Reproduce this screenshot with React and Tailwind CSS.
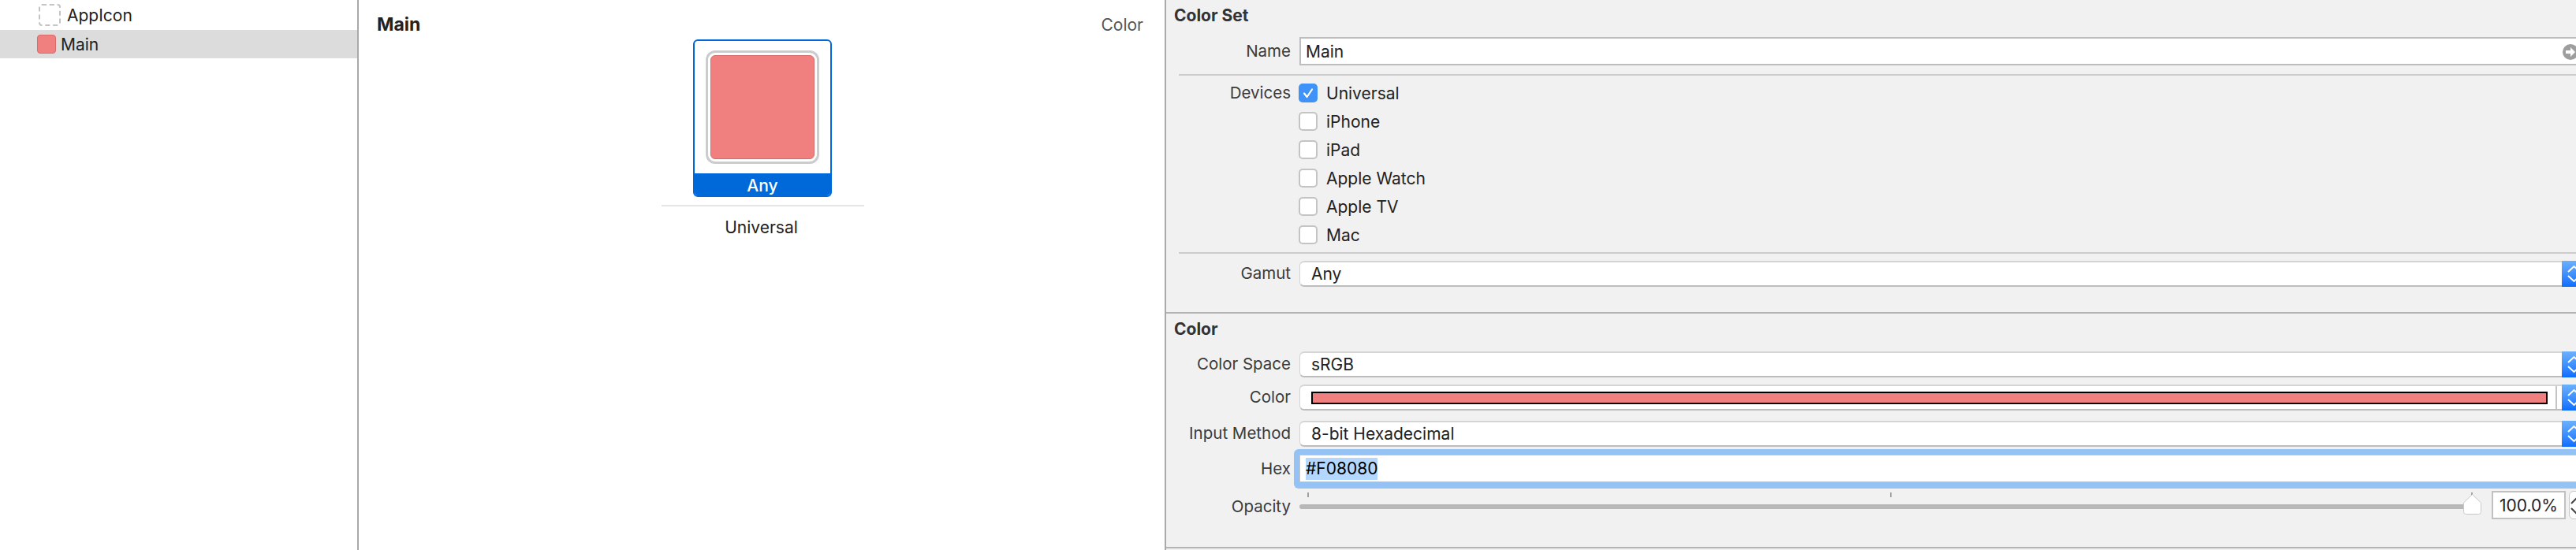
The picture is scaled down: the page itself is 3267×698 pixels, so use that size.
import React from 'react';

const Check = () => (
  <svg viewBox="0 0 24 24" className="w-6 h-6" fill="none">
    <path d="M7 12.5l3.6 4.5L17 7.5" stroke="#fff" strokeWidth="2.2" strokeLinecap="round" strokeLinejoin="round" />
  </svg>
);

const Chevrons = ({ color = '#fff' }) => (
  <svg viewBox="0 0 18 33" className="w-[18px] h-[33px] shrink-0" fill="none">
    <path d="M8 14l7.500-7 7.500 7" stroke={color} strokeWidth="2" />
    <path d="M8 19l7.500 7 7.500-7" stroke={color} strokeWidth="2" />
  </svg>
);

const Stepper = () => (
  <div className="absolute right-0 top-[-2px] h-[33px] w-[18px] overflow-hidden bg-gradient-to-b from-[#6cb0fb] to-[#0a6cff]">
    <Chevrons />
  </div>
);

const Label = ({ children }) => (
  <div className="w-[158px] text-right text-[20.5px] text-[#3a3a3a] shrink-0 mr-[11px]">{children}</div>
);

const Select = ({ label, mt, children }) => (
  <div className={`flex items-center h-[33px] ${mt}`}>
    <Label>{label}</Label>
    <div className="relative flex-1 h-full bg-white rounded-l-[6px] border-t-2 border-b-2 border-l border-t-[#d4d4d4] border-b-[#bdbdbd] border-l-[#d4d4d4] pl-[14px] flex items-center text-[#222]">
      {children}
      <Stepper />
    </div>
  </div>
);

const devices = ['Universal', 'iPhone', 'iPad', 'Apple Watch', 'Apple TV', 'Mac'];

export default function App() {
  return (
    <div className="flex w-[3267px] h-[698px] overflow-hidden bg-white font-['Inter',sans-serif] text-[21px] leading-none text-[#222]">
      {/* asset list */}
      <div className="w-[453px] shrink-0 border-r-2 border-[#a9a9a9] box-content">
        <div className="flex items-center h-[38px] pl-[49px]">
          <div className="w-[28px] h-[28px] rounded-[4px] border-2 border-dashed border-[#c4c4c4]" />
          <span className="ml-2">AppIcon</span>
        </div>
        <div className="flex items-center h-[36px] pl-[47px] bg-[#dcdcdc]">
          <div className="w-6 h-6 rounded-[4px] bg-[#f08080] border border-[#d96a6a]" />
          <span className="ml-[6px]">Main</span>
        </div>
      </div>

      {/* canvas */}
      <div className="w-[1022px] shrink-0 border-r-2 border-[#a9a9a9] box-content">
        <div className="flex justify-between items-center h-[50px] pl-[23px] pr-[27px] pt-[12px]">
          <span className="font-bold text-[23px]">Main</span>
          <span className="text-[#555]">Color</span>
        </div>
        <div className="flex flex-col items-center ml-[2px]">
          <div className="w-[176px] h-[200px] rounded-[6px] border-2 border-[#0069d9] flex flex-col overflow-hidden">
            <div className="flex-1 flex items-center justify-center">
              <div className="w-[144px] h-[144px] rounded-[12px] border-[3px] border-[#cccccc] p-[3px]">
                <div className="w-full h-full rounded-[6px] bg-[#f08080] border border-[#d96a6a]" />
              </div>
            </div>
            <div className="h-[28px] bg-[#0069d9] text-white font-medium flex items-center justify-center pt-[3px]">Any</div>
          </div>
          <div className="w-[257px] h-[2px] bg-[#e5e5e5] mt-[10px]" />
          <div className="mt-4 mr-[3px]">Universal</div>
        </div>
      </div>

      {/* inspector */}
      <div className="flex-1 bg-[#f1f1f1] text-[#222]">
        <div className="h-[396px]">
          <div className="h-[47px] pl-[10px] pt-[9px] font-bold text-[#333]">Color Set</div>
          <div className="flex items-center h-[36px]">
            <Label>Name</Label>
            <div className="relative flex-1 h-full bg-white border-2 border-r-0 border-[#bdbdbd] pl-[6px] flex items-center">
              Main
              <svg viewBox="0 0 20 20" className="absolute right-[-3px] top-[7px] w-5 h-5">
                <circle cx="10" cy="10" r="10" fill="#9e9e9e" />
                <path d="M4 8h6V4l6 6-6 6v-4H4z" fill="#fff" />
              </svg>
            </div>
          </div>
          <div className="h-[2px] bg-[#cccccc] ml-[16px] mt-[11px]" />
          <div className="flex mt-[10px]">
            <div className="pt-[2px]">
              <Label>Devices</Label>
            </div>
            <div className="flex flex-col gap-3 ml-[-1px]">
              {devices.map((d, i) => (
                <div key={d} className="flex items-center h-6">
                  <div className={i === 0 ? 'w-6 h-6 rounded-[5px] bg-[#3f92f7]' : 'w-6 h-6 rounded-[5px] bg-white border-2 border-[#c4c4c4]'}>
                    {i === 0 && <Check />}
                  </div>
                  <span className="ml-[11px]">{d}</span>
                </div>
              ))}
            </div>
          </div>
          <div className="h-[2px] bg-[#cccccc] ml-[16px] mt-[10px]" />
          <Select label="Gamut" mt="mt-[9px]">Any</Select>
        </div>

        <div className="h-[296px] border-t-2 border-b-2 border-[#b4b4b4] box-content">
          <div className="h-[48px] pl-[10px] pt-[9px] font-bold text-[#333]">Color</div>
          <Select label="Color Space">sRGB</Select>
          <Select label="Color" mt="mt-[9px]">
            <div className="w-[1568px] h-4 bg-[#f08080] border-[2.5px] border-black" />
            <div className="absolute right-[24px] top-0 h-full w-[2px] bg-[#c4c4c4]" />
          </Select>
          <Select label="Input Method" mt="mt-[13px]">8-bit Hexadecimal</Select>
          <div className="flex items-center h-[50px] mt-[3px]">
            <div className="w-[158px] text-right text-[20.5px] text-[#3a3a3a] shrink-0 mr-[4px]">Hex</div>
            <div className="flex-1 h-full pl-[7px] pt-[7px] pb-[8px] rounded-l-[6px] bg-[#94c2f5]">
              <div className="h-full bg-white border-t border-b border-l border-[#c4c4c4] pl-[7px] flex items-center text-black">
                <span className="bg-[#b3d7ff] h-7 flex items-center">#F08080</span>
              </div>
            </div>
          </div>
          <div className="relative flex items-center h-[40px] mt-[3px]">
            <Label>Opacity</Label>
            <div className="relative h-[6px] flex-1 mr-[120px] rounded-full bg-[#b8b8b8]">
              <div className="absolute left-[10px] top-[-15px] w-[2px] h-[6px] bg-[#a0a0a0]" />
              <div className="absolute left-[749px] top-[-15px] w-[2px] h-[6px] bg-[#a0a0a0]" />
              <div className="absolute right-[11px] top-[-15px] w-[2px] h-[3px] bg-[#a0a0a0]" />
              <svg viewBox="0 0 23 26" className="absolute right-0 top-[-13px] w-[23px] h-[26px]">
                <path d="M11.500 .5 22.500 11v11.500a3 3 0 0 1-3 3h-16a3 3 0 0 1-3-3V11z" fill="#fff" stroke="#c8c8c8" />
              </svg>
            </div>
            <div className="absolute left-[1681px] top-0 w-[94px] h-9 bg-white border-2 border-[#c0c0c0] flex items-center justify-center">100.0%</div>
            <div className="absolute left-[1779px] top-0 w-[20px] h-9 overflow-hidden bg-white rounded-l-[6px] border border-[#c8c8c8]">
              <svg viewBox="0 0 20 36" className="w-5 h-9" fill="none">
                <path d="M2 15l6-6 6 6" stroke="#444" strokeWidth="2" />
                <path d="M2 21l6 6 6-6" stroke="#444" strokeWidth="2" />
              </svg>
            </div>
          </div>
        </div>
      </div>
    </div>
  );
}
